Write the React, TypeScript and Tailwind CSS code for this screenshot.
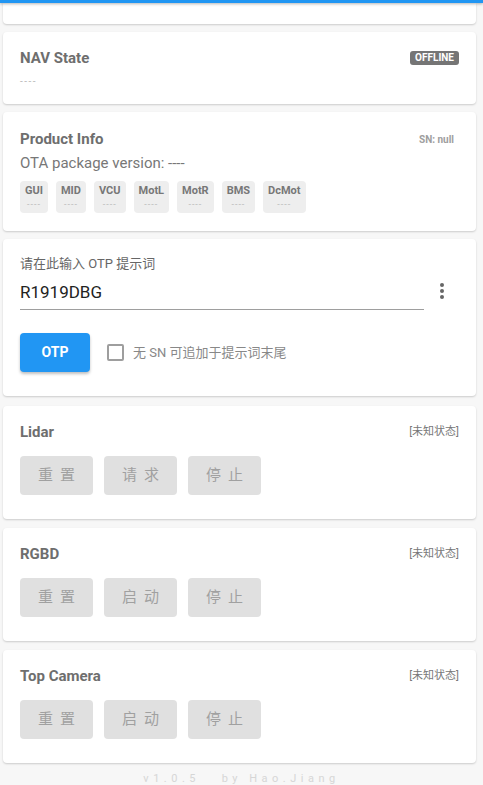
import React from "react";

const font = { fontFamily: "Roboto, 'Noto Sans CJK SC', sans-serif" };

function Card({ className = "", children }: { className?: string; children?: React.ReactNode }) {
  return (
    <div className={`ml-[3px] mr-[7px] bg-white rounded-[4px] shadow-[0_1px_2px_rgba(0,0,0,0.18)] ${className}`}>
      {children}
    </div>
  );
}

function GreyButton({ label }: { label: string }) {
  return (
    <div className="w-[73px] h-[39px] rounded-[4px] bg-[#e0e0e0] flex items-center justify-center text-[15px] text-[#a0a0a0] tracking-[7px] pl-[7px]">
      {label}
    </div>
  );
}

function DeviceCard({ title, actions }: { title: string; actions: string[] }) {
  return (
    <Card className="px-[17px] pt-[16px] pb-[24px]">
      <div className="flex items-center justify-between h-[20px]">
        <span className="text-[15px] font-bold text-[#6e6e6e]">{title}</span>
        <span className="text-[11px] text-[#777]">[未知状态]</span>
      </div>
      <div className="flex gap-[11px] mt-[14px]">
        {actions.map((a) => (
          <GreyButton key={a} label={a} />
        ))}
      </div>
    </Card>
  );
}

const chips = ["GUI", "MID", "VCU", "MotL", "MotR", "BMS", "DcMot"];

export default function App() {
  return (
    <div className="min-h-[785px] bg-[#f7f7f7] relative" style={font}>
      <div className="h-[3px] bg-[#2196F3] shadow-[0_1px_3px_rgba(0,0,0,0.3)] relative z-10" />
      <Card className="h-[21px] rounded-t-none" />

      <div className="flex flex-col gap-[8px] mt-[8px]">
        {/* NAV State */}
        <Card className="px-[17px] pt-[16px] h-[72px]">
          <div className="flex items-center justify-between h-[20px]">
            <span className="text-[15px] font-bold text-[#6e6e6e]">NAV State</span>
            <span className="bg-[#757575] text-white text-[10px] font-bold leading-[14px] px-[5px] rounded-[3px]">
              OFFLINE
            </span>
          </div>
          <div className="text-[10px] text-[#bbb] mt-[5px] leading-[18px] tracking-[1.5px]">----</div>
        </Card>

        {/* Product Info */}
        <Card className="px-[17px] pt-[17px] pb-[18px]">
          <div className="flex items-center justify-between h-[20px]">
            <span className="text-[15px] font-bold text-[#6e6e6e]">Product Info</span>
            <span className="text-[10px] font-bold text-[#9e9e9e] mr-[5px]">SN: null</span>
          </div>
          <div className="text-[15px] text-[#777] leading-[20px] mt-[4px]">OTA package version: ----</div>
          <div className="flex gap-[8px] mt-[8px]">
            {chips.map((c) => (
              <div
                key={c}
                className="h-[32px] px-[5px] rounded-[4px] bg-[#eeeeee] flex flex-col items-center pt-[3px]"
              >
                <span className="text-[11px] font-bold text-[#777] leading-[13px]">{c}</span>
                <span className="text-[9px] text-[#bbb] leading-[13px] mt-[1px] tracking-[1px]">----</span>
              </div>
            ))}
          </div>
        </Card>

        {/* OTP */}
        <Card className="px-[17px] pt-[17px] pb-[24px]">
          <div className="text-[13px] text-[#666] leading-[16px]">请在此输入 OTP 提示词</div>
          <div className="flex items-start mt-[5px]">
            <div className="w-[404px] border-b border-[#9e9e9e] pt-[4px] pb-[4px]">
              <span className="text-[17px] text-[#222] leading-[21px]">R1919DBG</span>
            </div>
            <div className="flex-1 flex justify-center pt-[5px]">
              <svg width="6" height="18" viewBox="0 0 6 18">
                <circle cx="3" cy="3" r="2" fill="#666" />
                <circle cx="3" cy="9" r="2" fill="#666" />
                <circle cx="3" cy="15" r="2" fill="#666" />
              </svg>
            </div>
          </div>
          <div className="flex items-center mt-[23px]">
            <div className="w-[70px] h-[39px] rounded-[4px] bg-[#2196F3] shadow-[0_2px_3px_rgba(0,0,0,0.25)] flex items-center justify-center text-white text-[14px] font-bold">
              OTP
            </div>
            <div className="w-[17px] h-[17px] border-2 border-[#9e9e9e] rounded-[2px] ml-[17px]" />
            <span className="ml-[9px] text-[13px] text-[#888]">无 SN 可追加于提示词末尾</span>
          </div>
        </Card>

        <div className="flex flex-col gap-[9px] mt-[2px]">
          <DeviceCard title="Lidar" actions={["重置", "请求", "停止"]} />
          <DeviceCard title="RGBD" actions={["重置", "启动", "停止"]} />
          <DeviceCard title="Top Camera" actions={["重置", "启动", "停止"]} />
        </div>
      </div>

      <div className="text-center text-[11px] text-[#d6d6d6] tracking-[4.5px] mt-[8px] whitespace-pre">
        v1.0.5   by Hao.Jiang
      </div>
    </div>
  );
}
